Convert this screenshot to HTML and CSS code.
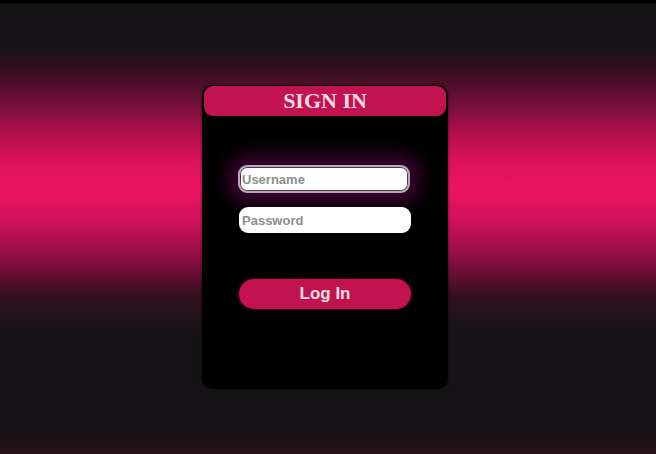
FILE: index.html
```html
<!DOCTYPE html>
<html>
<head>
<meta charset="utf-8">
<link rel="stylesheet" href="styles.css">
</head>
<body>
<div class="page">
  <div class="card">
    <div class="card-header">SIGN IN</div>
    <form class="form">
      <div class="field field-focus"><input type="text" placeholder="Username"></div>
      <div class="field"><input type="password" placeholder="Password"></div>
      <button type="button" class="btn">Log In</button>
    </form>
  </div>
</div>
</body>
</html>
```
FILE: styles.css
```css
html, body {
  margin: 0;
  padding: 0;
}
body {
  width: 656px;
  height: 454px;
  overflow: hidden;
  background: linear-gradient(to bottom,
    #000 0px, #000 3px,
    #161316 4px, #161316 46px,
    #2e0f1c 65px,
    #6a0f36 100px,
    #b0104a 132px,
    #da125a 160px,
    #ec1460 188px,
    #d4125a 218px,
    #a21048 248px,
    #6c0e34 272px,
    #3a0f20 292px,
    #1c1318 320px,
    #161316 335px,
    #161316 425px,
    #1c1216 440px,
    #241219 454px);
  font-family: "Liberation Sans", Arial, sans-serif;
}
.page {
  display: flex;
  justify-content: center;
  padding-top: 85px;
}
.card {
  width: 246px;
  height: 304px;
  background: #000;
  border-radius: 10px;
  box-sizing: border-box;
  padding: 1px 2px;
  margin-left: -6px;
  box-shadow: 0 0 3px rgba(0,0,0,0.6);
}
.card-header {
  height: 30px;
  background: #c2124f;
  border-radius: 9px;
  color: #f4dce5;
  font-family: "Liberation Serif", "Times New Roman", serif;
  font-weight: bold;
  font-size: 22px;
  line-height: 30px;
  text-align: center;
}
.form {
  display: flex;
  flex-direction: column;
  align-items: center;
  padding-top: 49px;
}
.field {
  width: 172px;
  height: 26px;
  box-sizing: border-box;
  background: #fff;
  border-radius: 9px;
  display: flex;
  align-items: center;
}
.field + .field {
  margin-top: 14px;
}
.field-focus {
  height: 28px;
  margin-left: -2px;
  border: 2px solid #b9a6b8;
  box-shadow: inset 0 0 0 1px #4a3a48, 0 0 18px 10px rgba(100, 6, 80, 0.6);
}
.field input {
  border: none;
  outline: none;
  background: transparent;
  width: 100%;
  padding: 0 0 0 3px;
  font-family: "Liberation Sans", Arial, sans-serif;
  font-weight: bold;
  font-size: 13px;
  color: #333;
}
.field-focus input {
  padding-left: 2px;
}
.field input::placeholder {
  color: #8e8e8e;
}
.btn {
  margin-top: 46px;
  width: 172px;
  height: 30px;
  border: none;
  border-radius: 15px;
  background: #c2124f;
  color: #f6e0e8;
  font-family: "Liberation Sans", Arial, sans-serif;
  font-weight: bold;
  font-size: 17px;
  padding: 0;
  box-shadow: 0 0 3px rgba(194, 18, 79, 0.6);
}
```
